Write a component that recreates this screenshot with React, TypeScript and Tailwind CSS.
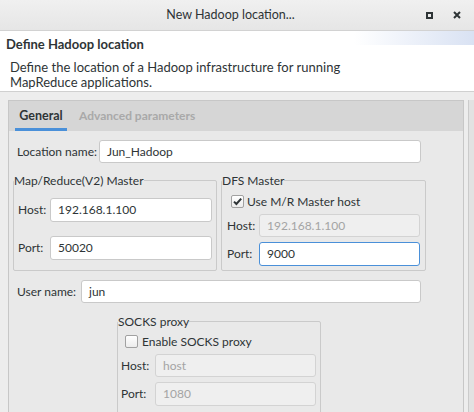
import React from "react";

const ui = "font-['Lato','Noto_Sans',sans-serif] text-[13px] text-[#2e3436]";

function TextBox({
  value,
  w,
  h = 23,
  disabled = false,
  focused = false,
}: {
  value: string;
  w: string;
  h?: number;
  disabled?: boolean;
  focused?: boolean;
}) {
  const tone = disabled
    ? "bg-[#efefef] border-[#d3d3d3] text-[#a4a4a4]"
    : focused
      ? "bg-white border-[#4a90d9] text-[#2e3436]"
      : "bg-white border-[#c9c9c9] text-[#2e3436]";
  return (
    <div
      className={`${w} ${h === 24 ? "h-[24px]" : "h-[23px]"} ${tone} flex items-center rounded-[3px] border pl-[7px]`}
    >
      {value}
    </div>
  );
}

function Check({ checked }: { checked: boolean }) {
  return (
    <span className="flex h-[13px] w-[13px] items-center justify-center rounded-[2px] border border-[#a1a1a1] bg-gradient-to-b from-white to-[#ececec]">
      {checked && (
        <svg width="11" height="11" viewBox="0 0 11 11">
          <path d="M2 5.6 L4.4 8 L9.2 2.6" fill="none" stroke="#2e3436" strokeWidth="2" />
        </svg>
      )}
    </span>
  );
}

function Group({ title, className, children }: { title: string; className: string; children: React.ReactNode }) {
  return (
    <fieldset className={`${className} rounded-[2px] border border-[#cacaca]`}>
      <legend className="whitespace-nowrap leading-[15px]">{title}</legend>
      {children}
    </fieldset>
  );
}

function Row({ label, labelW, children, className = "" }: { label: string; labelW: string; children: React.ReactNode; className?: string }) {
  return (
    <div className={`flex items-center ${className}`}>
      <span className={`${labelW} shrink-0 whitespace-nowrap`}>{label}</span>
      {children}
    </div>
  );
}

export default function App() {
  return (
    <div className={`${ui} flex h-[412px] w-[474px] flex-col overflow-hidden bg-[#ededed]`}>
      {/* window title */}
      <div className="flex h-[31px] shrink-0 items-center border-b border-[#d2d2d2] bg-gradient-to-b from-[#f0f0f0] to-[#e6e6e6] text-[12.5px]">
        <div className="flex-1" />
        <span className="whitespace-nowrap">New Hadoop location...</span>
        <div className="flex flex-1 items-center justify-end gap-[20px] pr-[13px]">
          <span className="h-[7px] w-[7px] border-2 border-[#2e3436]" />
          <svg width="8" height="8" viewBox="0 0 8 8">
            <path d="M1 1 L7 7 M7 1 L1 7" stroke="#2e3436" strokeWidth="2" />
          </svg>
        </div>
      </div>

      {/* wizard banner */}
      <div className="relative h-[61px] shrink-0 border-b border-[#d0d0d0] bg-white">
        <div className="absolute right-0 top-0 h-[14px] w-[120px] bg-gradient-to-r from-white to-[#d9e2f3]" />
        <div className="relative pl-[6px] pt-[6px] font-bold leading-[15px]">Define Hadoop location</div>
        <p className="mt-[8px] pl-[10px] leading-[15px]">
          Define the location of a Hadoop infrastructure for running
          <br />
          MapReduce applications.
        </p>
      </div>

      {/* body */}
      <div className="flex flex-1 pl-[8px] pt-[8px] text-[12px]">
        <div className="flex w-[456px] flex-col border border-b-0 border-[#c7c7c7] bg-[#e9e9e9]">
          <div className="flex h-[30px] shrink-0 bg-[#d6d6d6] pl-[6px] font-bold">
            <div className="flex w-[52px] items-center justify-center border-b-[3px] border-[#4a90d9] pt-[3px] text-[12.5px]">General</div>
            <div className="flex items-center whitespace-nowrap px-[12px] text-[#a9a9a9]">Advanced parameters</div>
          </div>

          <Row label="Location name:" labelW="w-[82px]" className="pl-[8px] pt-[9px]">
            <TextBox value="Jun_Hadoop" w="w-[322px]" />
          </Row>

          <div className="mt-[10px] flex items-start gap-[4px] pl-[4px]">
            <Group title="Map/Reduce(V2) Master" className="w-[204px]">
              <div className="px-[4px] pb-[10px] pt-[10px]">
                <Row label="Host:" labelW="w-[32px]">
                  <TextBox value="192.168.1.100" w="w-[162px]" h={24} />
                </Row>
                <Row label="Port:" labelW="w-[32px]" className="mt-[14px]">
                  <TextBox value="50020" w="w-[162px]" h={24} />
                </Row>
              </div>
            </Group>
            <Group title="DFS Master" className="w-[205px]">
              <div className="px-[5px] pb-[4px] pt-[6px]">
                <label className="flex h-[15px] items-center gap-[3px] whitespace-nowrap pl-[4px]">
                  <Check checked />
                  Use M/R Master host
                </label>
                <Row label="Host:" labelW="w-[32px]" className="mt-[5px]">
                  <TextBox value="192.168.1.100" w="w-[161px]" disabled />
                </Row>
                <Row label="Port:" labelW="w-[32px]" className="mt-[5px]">
                  <TextBox value="9000" w="w-[161px]" h={24} focused />
                </Row>
              </div>
            </Group>
          </div>

          <Row label="User name:" labelW="w-[64px]" className="mt-[9px] pl-[8px]">
            <TextBox value="jun" w="w-[340px]" />
          </Row>

          <Group title="SOCKS proxy" className="ml-[108px] mt-[11px] w-[204px]">
            <div className="px-[3px] pb-[8px] pt-[5px]">
              <label className="flex h-[15px] items-center gap-[4px] whitespace-nowrap pl-[4px]">
                <Check checked={false} />
                Enable SOCKS proxy
              </label>
              <Row label="Host:" labelW="w-[34px]" className="mt-[5px]">
                <TextBox value="host" w="w-[161px]" disabled />
              </Row>
              <Row label="Port:" labelW="w-[34px]" className="mt-[5px]">
                <TextBox value="1080" w="w-[161px]" h={24} disabled />
              </Row>
            </div>
          </Group>
        </div>
        <div className="ml-[4px] w-[6px] border-l border-[#cbcbcb] bg-[#e2e2e2]" />
      </div>
    </div>
  );
}
